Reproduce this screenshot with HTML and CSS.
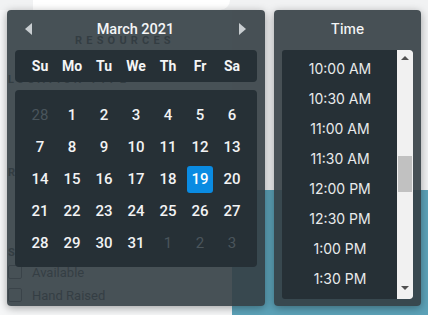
FILE: index.html
```
<!DOCTYPE html>
<html>
<head>
<meta charset="utf-8">
<link rel="stylesheet" href="styles.css">
</head>
<body>
<div class="page">
  <div class="topbar"><div class="topcard"></div></div>
  <div class="page-body">
    <div class="filters">
      <div class="section-title">RESOURCES</div>
      <div class="label">LOCATION TYPE</div>
      <div class="label l-r">R</div>
      <div class="label l-s">S</div>
      <div class="check"><span class="box"></span>Available</div>
      <div class="check"><span class="box"></span>Hand Raised</div>
    </div>
    <div class="map"></div>
  </div>
</div>

<div class="picker">
  <div class="cal panel">
    <div class="cal-head">
      <span class="arrow left"></span>
      <span class="title">March 2021</span>
      <span class="arrow right"></span>
    </div>
    <div class="weekdays">
      <span>Su</span><span>Mo</span><span>Tu</span><span>We</span><span>Th</span><span>Fr</span><span>Sa</span>
    </div>
    <div class="days">
      <span class="dim">28</span><span>1</span><span>2</span><span>3</span><span>4</span><span>5</span><span>6</span>
      <span>7</span><span>8</span><span>9</span><span>10</span><span>11</span><span>12</span><span>13</span>
      <span>14</span><span>15</span><span>16</span><span>17</span><span>18</span><span class="sel"><b>19</b></span><span>20</span>
      <span>21</span><span>22</span><span>23</span><span>24</span><span>25</span><span>26</span><span>27</span>
      <span>28</span><span>29</span><span>30</span><span>31</span><span class="dim">1</span><span class="dim">2</span><span class="dim">3</span>
    </div>
  </div>
  <div class="time panel">
    <div class="time-head">Time</div>
    <div class="list">
      <div class="items">
        <div>10:00 AM</div>
        <div>10:30 AM</div>
        <div>11:00 AM</div>
        <div>11:30 AM</div>
        <div>12:00 PM</div>
        <div>12:30 PM</div>
        <div>1:00 PM</div>
        <div>1:30 PM</div>
      </div>
      <div class="scrollbar">
        <span class="sb-up"></span>
        <span class="sb-thumb"></span>
        <span class="sb-down"></span>
      </div>
    </div>
  </div>
</div>
</body>
</html>
```

FILE: styles.css
```
* { box-sizing: border-box; }
html, body { margin: 0; padding: 0; }
body {
  width: 428px;
  height: 315px;
  overflow: hidden;
  background: #f1f2f3;
  font-family: "Roboto", "Liberation Sans", sans-serif;
  position: relative;
}

.page { width: 428px; height: 315px; }
.topbar { height: 10px; padding-left: 33px; }
.topcard {
  width: 197px;
  height: 10px;
  background: #ffffff;
  border-bottom-right-radius: 12px;
}
.page-body {
  display: grid;
  grid-template-columns: 232px 1fr;
  height: 305px;
}
.filters {
  background: #f6f7f8;
  padding: 25px 0 0 8px;
  color: #2c3338;
}
.section-title {
  font-size: 11px;
  font-weight: 700;
  letter-spacing: 4.2px;
  padding-left: 67px;
  height: 12px;
  line-height: 12px;
}
.label {
  font-size: 11px;
  font-weight: 700;
  letter-spacing: 3px;
  margin-top: 27px;
  line-height: 12px;
}
.l-r { margin-top: 81px; }
.l-s { margin-top: 68px; }
.check {
  display: flex;
  align-items: center;
  gap: 10px;
  font-size: 13px;
  height: 20px;
  margin-top: 3px;
  color: #3a4248;
}
.check + .check { margin-top: 3px; }
.box {
  width: 14px;
  height: 14px;
  border: 1px solid #6d757a;
  border-radius: 2px;
}
.map {
  margin-top: 180px;
  background: #5ca2b8;
}

/* Picker overlay */
.picker {
  position: absolute;
  left: 7px;
  top: 10px;
  display: flex;
  gap: 9px;
}
.panel {
  height: 296px;
  background: rgba(52, 62, 68, 0.9);
  border-radius: 4px;
  box-shadow: 0 2px 8px rgba(0, 0, 0, 0.35);
}
.cal {
  width: 258px;
  padding: 0 8px 8px;
}
.cal-head {
  height: 40px;
  display: flex;
  align-items: center;
  justify-content: space-between;
  padding: 0 11px 0 10px;
}
.title {
  color: #f4f5f6;
  font-size: 14.5px;
  font-weight: 500;
  margin-bottom: 2px;
}
.arrow {
  width: 0;
  height: 0;
  border-top: 6px solid transparent;
  border-bottom: 6px solid transparent;
  margin-bottom: 3px;
}
.arrow.left { border-right: 7px solid #c9ced1; }
.arrow.right { border-left: 7px solid #c9ced1; }

.weekdays, .days {
  background: #263036;
  border-radius: 4px;
  display: grid;
  grid-template-columns: repeat(7, 32px);
  padding: 0 9px;
}
.weekdays {
  height: 32px;
  align-items: center;
  color: #f4f5f6;
  font-weight: 700;
  font-size: 14px;
}
.weekdays span, .days span { text-align: center; }
.days {
  margin-top: 8px;
  padding: 9px 9px 8px;
  grid-auto-rows: 32px;
  color: #f2f3f4;
  font-size: 15px;
  font-weight: 500;
}
.days span {
  display: flex;
  align-items: center;
  justify-content: center;
}
.days .dim { color: #4a555c; font-weight: 400; }
.days .sel b {
  font-weight: 500;
  width: 26px;
  height: 27px;
  background: #0a8be2;
  border-radius: 3px;
  display: flex;
  align-items: center;
  justify-content: center;
  color: #ffffff;
}

.time {
  width: 147px;
  padding: 0 8px 7px;
}
.time-head {
  height: 40px;
  display: flex;
  align-items: center;
  justify-content: center;
  color: #f4f5f6;
  font-family: "Inter", "Roboto", sans-serif;
  font-size: 14px;
  font-weight: 500;
  padding-bottom: 3px;
}
.list {
  height: 249px;
  background: #263036;
  border-radius: 3px;
  display: flex;
  overflow: hidden;
}
.items {
  flex: 1;
  padding-top: 3px;
  font-family: "Inter", "Roboto", sans-serif;
  font-size: 14px;
  color: #e8eaeb;
}
.items div {
  height: 30px;
  display: flex;
  align-items: center;
  justify-content: center;
  padding-left: 1px;
}
.scrollbar {
  width: 16px;
  background: #f1f1f1;
  border-radius: 0 3px 3px 0;
  display: flex;
  flex-direction: column;
  align-items: center;
  padding: 6px 0 0;
}
.sb-up, .sb-down {
  width: 0;
  height: 0;
  border-left: 4px solid transparent;
  border-right: 4px solid transparent;
}
.sb-up { border-bottom: 4px solid #505050; }
.sb-down { border-top: 4px solid #505050; margin-top: 94px; }
.sb-thumb {
  width: 14px;
  height: 36px;
  background: #c1c1c1;
  margin-top: 96px;
}
```
